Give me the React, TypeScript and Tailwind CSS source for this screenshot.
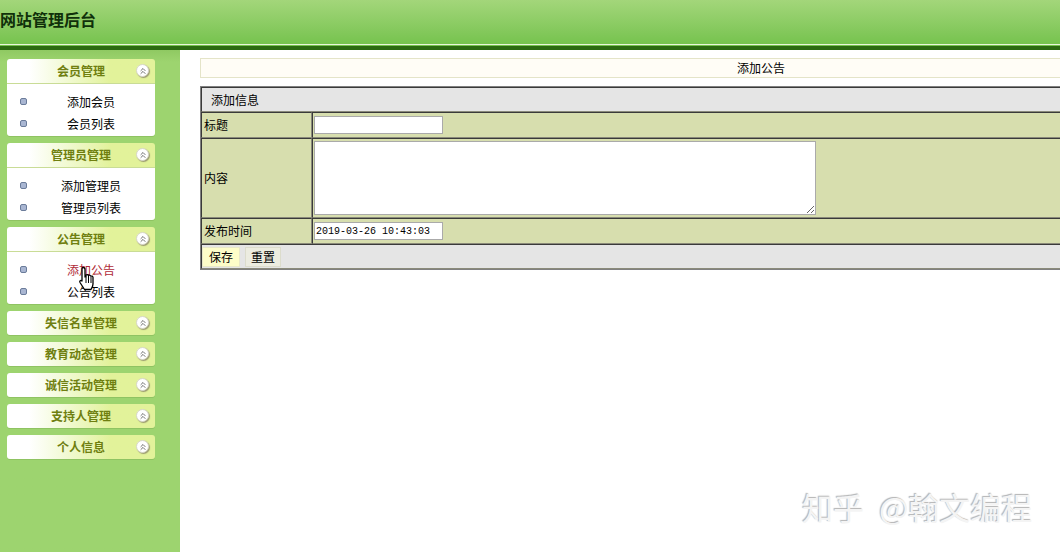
import { ChevronsUp } from 'lucide-react';

const FONT = 'font-["SimSun","Noto_Sans_CJK_SC",sans-serif]';

const groups = [
  { title: '会员管理', items: ['添加会员', '会员列表'] },
  { title: '管理员管理', items: ['添加管理员', '管理员列表'] },
  { title: '公告管理', items: ['添加公告', '公告列表'] },
  { title: '失信名单管理', items: [] },
  { title: '教育动态管理', items: [] },
  { title: '诚信活动管理', items: [] },
  { title: '支持人管理', items: [] },
  { title: '个人信息', items: [] },
];

function MenuGroup({ title, items }: { title: string; items: string[] }) {
  return (
    <div className="w-[148px] overflow-hidden rounded-[3px] shadow-[0_1px_0_#8fc362]">
      <div className="relative flex h-[24px] items-center justify-center bg-gradient-to-r from-white from-[15%] to-[#e2f29a] to-[70%] text-[12px] font-bold text-[#6f7f10]">
        {title}
        <span className="absolute right-[6px] top-[5px] flex h-[13px] w-[13px] items-center justify-center rounded-full border border-[#d8d8c8] bg-white shadow-[1px_1px_1px_#9a9a70]">
          <ChevronsUp className="h-[10px] w-[10px] text-[#555]" strokeWidth={2} />
        </span>
      </div>
      {items.length > 0 && (
        <div className="flex h-[53px] flex-col border-t border-[#c9dc96] bg-white pt-[7px]">
          {items.map((item) => (
            <div key={item} className="relative flex h-[22px] items-center justify-center pl-[26px] pr-[6px] text-[12px] text-black">
              <span className="absolute left-[13px] top-[7px] h-[7px] w-[7px] rounded-[2px] border border-[#6b7c9a] bg-[#a9b6d2]" />
              <span className={item === '添加公告' ? 'text-[#b02a37]' : ''}>{item}</span>
            </div>
          ))}
        </div>
      )}
    </div>
  );
}

function Cell({ className, children }: { className?: string; children?: React.ReactNode }) {
  return (
    <div className={`border border-t-[#3a3a3a] border-l-[#3a3a3a] border-r-[#8a8a7a] border-b-[#8a8a7a] ${className ?? ''}`}>
      {children}
    </div>
  );
}

export default function App() {
  return (
    <div className={`flex h-[552px] w-[1060px] flex-col overflow-hidden bg-white ${FONT}`}>
      <header className="h-[50px] shrink-0 border-b-[4px] border-[#2c6a12] bg-gradient-to-b from-[#a3d67a] to-[#74c24c]">
        <div className="flex h-[45px] items-center border-b border-[#e8f5dc] pb-[6px] text-[16px] font-bold text-[#10300a]">
          网站管理后台
        </div>
      </header>

      <div className="flex min-h-0 flex-1">
        <aside className="flex w-[180px] shrink-0 flex-col gap-[7px] bg-gradient-to-b from-[#8fc962] to-[#9dd46f] to-[12px] pl-[7px] pt-[9px]">
          {groups.map((g) => (
            <MenuGroup key={g.title} title={g.title} items={g.items} />
          ))}
        </aside>

        <main className="relative flex-1 overflow-hidden pl-[20px] pt-[8px]">
          <div className="flex h-[20px] w-[1122px] items-center justify-center border border-[#e4e4c8] bg-[#fffdf6] text-[12px] text-black">
            添加公告
          </div>

          <div className="mt-[8px] flex w-[1122px] flex-col border border-[#808080] text-[12px] text-black">
            <Cell className="flex h-[25px] items-center bg-[#e5e5e5] pl-[9px]">添加信息</Cell>
            <div className="flex h-[26px]">
              <Cell className="flex w-[111px] shrink-0 items-center bg-[#d7deae] pl-[2px]">标题</Cell>
              <Cell className="flex flex-1 items-center bg-[#d7deae] pl-[1px]">
                <input className="h-[18px] w-[129px] border border-[#aaa] bg-white" readOnly />
              </Cell>
            </div>
            <div className="flex h-[80px]">
              <Cell className="flex w-[111px] shrink-0 items-center bg-[#d7deae] pl-[2px]">内容</Cell>
              <Cell className="flex flex-1 items-start bg-[#d7deae] pl-[1px] pt-[2px]">
                <textarea className="block h-[74px] w-[502px] border border-[#aaa] bg-white" readOnly />
              </Cell>
            </div>
            <div className="flex h-[26px]">
              <Cell className="flex w-[111px] shrink-0 items-center bg-[#d7deae] pl-[2px]">发布时间</Cell>
              <Cell className="flex flex-1 items-center bg-[#d7deae] pl-[1px]">
                <input
                  className="h-[18px] w-[129px] border border-[#aaa] bg-white pl-px font-['Liberation_Mono',monospace] text-[10px] text-black"
                  readOnly
                  value="2019-03-26 10:43:03"
                />
              </Cell>
            </div>
            <Cell className="flex h-[25px] items-center gap-[5px] bg-[#e5e5e5]">
              <button className="h-[20px] w-[38px] border border-[#e8e8c8] bg-[#fdfdc8] text-[12px]">保存</button>
              <button className="h-[20px] w-[36px] border border-[#dcdccc] bg-[#ecece0] text-[12px]">重置</button>
            </Cell>
          </div>

          <div className="absolute left-[622px] top-[437px] text-[31px] leading-[40px] [word-spacing:8px] text-[#f4f4f4] [text-shadow:-1px_-1px_1px_#b4b4b4] font-['Noto_Sans_CJK_SC',sans-serif]">
            知乎 @翰文编程
          </div>
        </main>
      </div>

      <svg className="absolute left-[78px] top-[266px]" width="20" height="26" viewBox="0 0 20 26">
        <path
          d="M5 1.500c1.200 0 2 .8 2 2V11l1-.3V9c1-.8 2-.5 2.400.5 1-.6 2-.3 2.400.7 1-.4 2 0 2.200 1.200V18c0 2-1 4-2 5.500H6.500L2 16.500c-.8-1.500.6-2.600 1.800-1.600L4 15V3.500c0-1.200.4-2 1-2z"
          fill="#fff"
          stroke="#000"
          strokeWidth="1.300"
          strokeLinejoin="round"
        />
        <path d="M8 11v6M10.500 10v7M13 11v6" stroke="#000" strokeWidth="1" fill="none" />
      </svg>
    </div>
  );
}
